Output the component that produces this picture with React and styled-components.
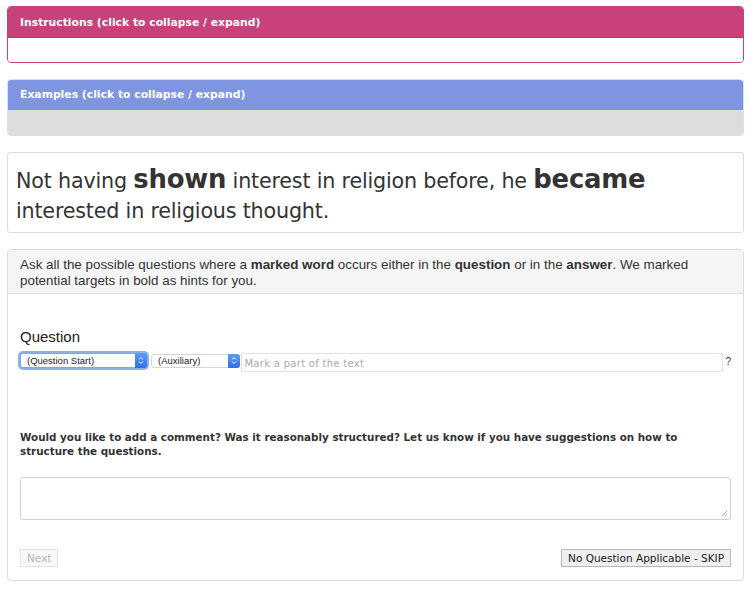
import React from "react";
import styled, { createGlobalStyle } from "styled-components";

const Global = createGlobalStyle`
  html, body { margin: 0; padding: 0; background: #fff; }
  body { font-family: "Liberation Sans", Arial, sans-serif; }
  * { box-sizing: border-box; }
`;

const Page = styled.div`
  padding: 6px 12px 8px 7px;
  display: flex;
  flex-direction: column;
`;

const Panel = styled.div`
  border: 1px solid ${(p) => p.$border};
  border-radius: 4px;
  overflow: hidden;
  margin-bottom: ${(p) => p.$mb || 16}px;
  background: #fff;
`;

const PanelHeader = styled.div`
  background: ${(p) => p.$bg};
  color: #fff;
  font-family: "DejaVu Sans", Verdana, sans-serif;
  font-weight: bold;
  font-size: 10.8px;
  height: ${(p) => p.$h}px;
  padding-left: 12px;
  display: flex;
  align-items: center;
  border-bottom: 1px solid ${(p) => p.$line};
`;

const PanelBody = styled.div`
  height: ${(p) => p.$h}px;
  background: ${(p) => p.$bg};
`;

const Sentence = styled.div`
  border: 1px solid #dcdcdc;
  border-radius: 3px;
  padding: 13px 8px 6px 8px;
  margin-bottom: 16px;
  font-family: "DejaVu Sans", Verdana, sans-serif;
  font-size: 20.7px;
  line-height: 30px;
  height: 81px;
  color: #333;
  letter-spacing: -0.2px;
`;

const Marked = styled.b`
  font-size: 25.9px;
  font-weight: bold;
  line-height: 20px;
`;

const TaskPanel = styled.div`
  border: 1px solid #dcdcdc;
  border-radius: 4px;
  overflow: hidden;
`;

const TaskHeading = styled.div`
  background: #f5f5f5;
  border-bottom: 1px solid #dddddd;
  padding: 7px 40px 6px 12px;
  font-size: 13.4px;
  line-height: 16px;
  color: #333;
  height: 44px;
`;

const TaskBody = styled.div`
  padding: 33px 12px 13px 12px;
  display: flex;
  flex-direction: column;
`;

const Label = styled.div`
  font-size: 15px;
  color: #222;
  line-height: 20px;
  margin-bottom: 5px;
`;

const QRow = styled.div`
  display: flex;
  align-items: center;
  height: 17px;
`;

const Select = styled.div`
  position: relative;
  width: ${(p) => p.$w}px;
  height: ${(p) => p.$h || 15}px;
  border: 1px solid ${(p) => (p.$focus ? "#7aa7f0" : "#d6d6d6")};
  box-shadow: ${(p) => (p.$focus ? "0 0 0 2px rgba(90,140,235,0.7)" : "none")};
  border-radius: 3px;
  background: #fff;
  font-size: 9.5px;
  color: #222;
  display: flex;
  align-items: center;
  padding-left: 6px;
  margin-right: ${(p) => p.$mr || 0}px;
`;

const Arrow = styled.span`
  position: absolute;
  right: -1px;
  top: -1px;
  bottom: -1px;
  width: 12px;
  background: linear-gradient(#5c9cf8, #2d6fe8);
  border-radius: 0 3px 3px 0;
  display: flex;
  align-items: center;
  justify-content: center;
`;

const TextInput = styled.div`
  flex: 0 0 482px;
  height: 19px;
  border: 1px solid #e3e3e3;
  color: #aaa;
  font-family: "DejaVu Sans", Verdana, sans-serif;
  font-size: 10px;
  padding: 4px 0 0 2px;
  margin-top: 3px;
  margin-left: 1px;
  letter-spacing: 0.3px;
`;

const QMark = styled.span`
  font-size: 10px;
  color: #333;
  margin-left: 2px;
  margin-top: 2px;
`;

const CommentLabel = styled.div`
  margin-top: 61px;
  font-family: "DejaVu Sans", Verdana, sans-serif;
  font-weight: bold;
  font-size: 10.35px;
  line-height: 14px;
  color: #333;
`;

const TextArea = styled.div`
  position: relative;
  margin-top: 19px;
  width: 711px;
  height: 43px;
  border: 1px solid #cfcfcf;
  border-radius: 3px;
  background: #fff;
`;

const Grip = styled.svg`
  position: absolute;
  right: 2px;
  bottom: 2px;
`;

const Footer = styled.div`
  margin-top: 29px;
  display: flex;
  justify-content: space-between;
  width: 711px;
`;

const Button = styled.div`
  height: 18px;
  padding: 0 6px;
  border: 1px solid ${(p) => (p.$disabled ? "#e2e2e2" : "#b8b8b8")};
  background: ${(p) => (p.$disabled ? "#f8f8f8" : "#efefef")};
  color: ${(p) => (p.$disabled ? "#b5b5b5" : "#222")};
  font-family: "DejaVu Sans", Verdana, sans-serif;
  font-size: 10.5px;
  display: flex;
  align-items: center;
`;

function Chevrons() {
  return (
    <svg width="6" height="9" viewBox="0 0 6 9">
      <path d="M1 3.5 L3 1.5 L5 3.5 M1 5.5 L3 7.5 L5 5.5" fill="none" stroke="#fff" strokeWidth="1" />
    </svg>
  );
}

export default function App() {
  return (
    <>
      <Global />
      <Page>
        <Panel $border="#c84079">
          <PanelHeader $bg="#c8417a" $h={31} $line="#c2306e">
            Instructions (click to collapse / expand)
          </PanelHeader>
          <PanelBody $h={24} $bg="#fff" />
        </Panel>
        <Panel $border="#d3e3ea">
          <PanelHeader $bg="#7f95e1" $h={30} $line="#7f95e1">
            Examples (click to collapse / expand)
          </PanelHeader>
          <PanelBody $h={25} $bg="#dcdede" />
        </Panel>
        <Sentence>
          Not having <Marked>shown</Marked> interest in religion before, he <Marked>became</Marked>{" "}
          interested in religious thought.
        </Sentence>
        <TaskPanel>
          <TaskHeading>
            Ask all the possible questions where a <b>marked word</b> occurs either in the <b>question</b> or
            in the <b>answer</b>. We marked potential targets in bold as hints for you.
          </TaskHeading>
          <TaskBody>
            <Label>Question</Label>
            <QRow>
              <Select $w={128} $focus $mr={4}>
                (Question Start)
                <Arrow>
                  <Chevrons />
                </Arrow>
              </Select>
              <Select $w={90} $h={14}>
                (Auxiliary)
                <Arrow>
                  <Chevrons />
                </Arrow>
              </Select>
              <TextInput>Mark a part of the text</TextInput>
              <QMark>?</QMark>
            </QRow>
            <CommentLabel>
              Would you like to add a comment? Was it reasonably structured? Let us know if you have suggestions on how to
              <br />
              structure the questions.
            </CommentLabel>
            <TextArea>
              <Grip width="7" height="7" viewBox="0 0 7 7">
                <path d="M6 1 L1 6 M6 4 L4 6" stroke="#999" strokeWidth="0.8" />
              </Grip>
            </TextArea>
            <Footer>
              <Button $disabled>Next</Button>
              <Button>No Question Applicable - SKIP</Button>
            </Footer>
          </TaskBody>
        </TaskPanel>
      </Page>
    </>
  );
}
